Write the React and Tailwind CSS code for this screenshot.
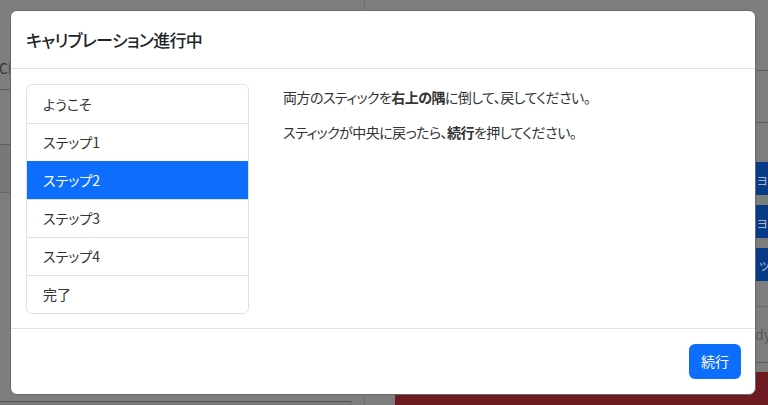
import React from "react";

const items = ["ようこそ", "ステップ1", "ステップ2", "ステップ3", "ステップ4", "完了"];

export default function App() {
  return (
    <div
      className="relative w-[768px] h-[405px] overflow-hidden bg-[#7d7d7d] text-[#212529] [font-feature-settings:'palt']"
      style={{ fontFamily: '"Noto Sans CJK JP", "Noto Sans", sans-serif' }}
    >
      {/* dimmed page underneath */}
      <div className="flex h-full">
        <div className="w-[365px] shrink-0 flex flex-col border-r border-[#6e6e6e]">
          <div className="h-[48px]" />
          <div className="h-[42px] flex items-center text-[14px] text-[#333] border-b border-[#5e5e5e]">
            <span className="-ml-[1px]">CE</span>
          </div>
          <div className="h-[55px] border-b border-[#5e5e5e]" />
          <div className="h-[48px] border-b border-[#666] bg-[#787878]" />
          <div className="flex-1" />
          <div className="h-[4px] w-[352px] border-t border-[#555] rounded-tr-[3px] bg-[#797979]" />
        </div>
        <div className="flex-1 min-w-0 overflow-hidden flex flex-col">
          <div className="h-[71px] border-b border-[#5e5e5e]" />
          <div className="h-[52px] border-b border-[#5e5e5e]" />
          <div className="h-[39px]" />
          <div className="flex flex-col gap-[10px] items-end">
            <div className="h-[33px] w-[80px] bg-[#073a87] text-[#aab4c8] text-[14px] leading-[33px] pl-[69px] whitespace-nowrap">ョン</div>
            <div className="h-[33px] w-[80px] bg-[#073a87] text-[#aab4c8] text-[14px] leading-[33px] pl-[69px] whitespace-nowrap">ョン</div>
            <div className="h-[33px] w-[80px] bg-[#073a87] text-[#aab4c8] text-[14px] leading-[33px] pl-[71px] whitespace-nowrap">ッノ</div>
          </div>
          <div className="h-[26px] border-b border-[#6a6a6a]" />
          <div className="h-[56px] border-b border-[#5e5e5e] flex items-center text-[14px] text-[#5a5a5a] pl-[390px] whitespace-nowrap">
            <span>dy</span>
          </div>
          <div className="h-[9px]" />
          <div className="flex-1 flex">
            <div className="w-[30px] shrink-0" />
            <div className="flex-1 bg-[#6e1a21]" />
          </div>
        </div>
      </div>

      {/* modal */}
      <div className="absolute left-[10px] top-[10px] w-[746px] h-[385px] bg-white rounded-[7px] border border-[#6a6a6a] flex flex-col">
        <div className="h-[58px] border-b border-[#dee2e6] flex items-center px-[15px]">
          <h5 className="text-[17px] font-medium text-[#212529] leading-none tracking-[-0.7px]">キャリブレーション進行中</h5>
        </div>
        <div className="flex-1 flex px-[15px] pt-[15px]">
          <div className="w-[223px] h-[230px] border border-[#dee2e6] rounded-[6px] overflow-hidden flex flex-col">
            {items.map((t, i) => (
              <div
                key={t}
                className={
                  i === 2
                    ? "h-[38px] flex items-center px-[16px] text-[14px] text-white bg-[#0d6efd] border-t border-[#0d6efd]"
                    : i === 0
                    ? "h-[38px] flex items-center px-[16px] text-[14px] text-[#333]"
                    : "h-[38px] flex items-center px-[16px] text-[14px] text-[#333] border-t border-[#dee2e6]"
                }
              >
                {t}
              </div>
            ))}
          </div>
          <div className="flex-1 pl-[34px] pt-[3px] text-[14px] text-[#333] leading-[21px] tracking-[-0.55px]">
            <p className="mb-[14px]">
              両方のスティックを<b className="font-bold">右上の隅</b>に倒して、戻してください。
            </p>
            <p>
              スティックが中央に戻ったら、<b className="font-bold">続行</b>を押してください。
            </p>
          </div>
        </div>
        <div className="h-[66px] border-t border-[#dee2e6] flex items-center justify-end pr-[14px]">
          <button className="h-[35px] px-[12px] rounded-[6px] bg-[#0d6efd] text-white text-[14px] leading-[21px]">
            続行
          </button>
        </div>
      </div>
    </div>
  );
}
